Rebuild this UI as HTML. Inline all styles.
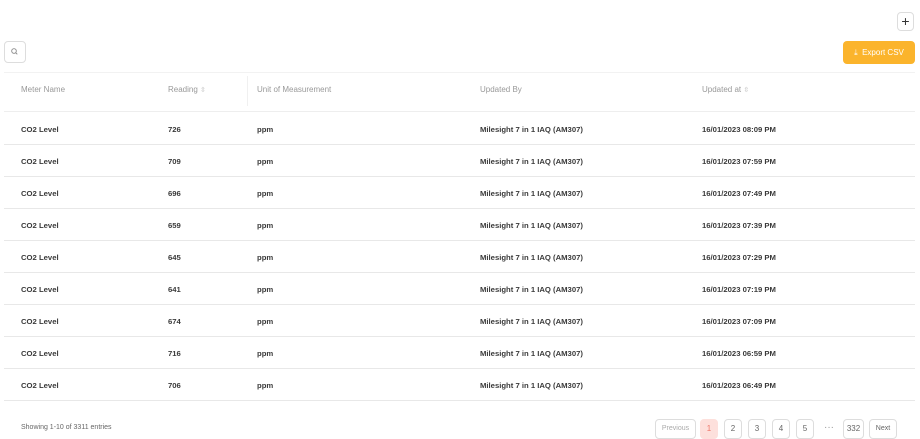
<!DOCTYPE html>
<html><head><style>
*{margin:0;padding:0;box-sizing:border-box}
body{width:920px;height:437px;background:#fff;font-family:"Liberation Sans",sans-serif;position:relative;overflow:hidden;color:#333}
.abs{position:absolute}
.plus{left:897px;top:12px;width:17px;height:19px;border:1px solid #ddd;border-radius:4px;font-size:14px;text-align:center;line-height:16px;color:#333}
.search{left:4px;top:41px;width:22px;height:22px;border:1px solid #ddd;border-radius:4px}
.exp{left:843px;top:41px;width:72px;height:23px;background:#fbb42c;border-radius:4px;color:#fff;font-size:8px;line-height:23px;text-align:center}
.hdr{left:4px;top:72px;width:911px;height:40px;border-top:1px solid #f2f2f2;border-bottom:1px solid #eee}
.t{position:absolute;font-size:8px;white-space:nowrap}
.h{color:#999}
.row{position:absolute;left:4px;width:911px;height:32px;border-bottom:1px solid #e8e8e8}
.row .t{top:12px;color:#3a3a3a;font-weight:bold;font-size:7.7px}
.pg{position:absolute;top:419px;height:20px;border:1px solid #ddd;border-radius:4px;font-size:8px;color:#666;text-align:center;line-height:18px}
</style></head><body>
<div class="abs plus">+</div>
<div class="abs search"><svg width="20" height="20" viewBox="0 0 20 20"><circle cx="9" cy="9" r="2.3" fill="none" stroke="#888" stroke-width="0.9"/><line x1="10.7" y1="10.7" x2="12.3" y2="12.3" stroke="#888" stroke-width="0.9"/></svg></div>
<div class="abs exp">⤓ &nbsp;Export CSV</div>
<div class="abs hdr">
<span class="t h" style="left:17px;top:12px">Meter Name</span>
<span class="t h" style="left:164px;top:12px">Reading <span style="font-size:7px;color:#bbb">⇳</span></span>
<div style="position:absolute;left:243px;top:3px;width:1px;height:30px;background:#f0f0f0"></div>
<span class="t h" style="left:253px;top:12px">Unit of Measurement</span>
<span class="t h" style="left:476px;top:12px">Updated By</span>
<span class="t h" style="left:698px;top:12px">Updated at <span style="font-size:7px;color:#bbb">⇳</span></span>
</div>
<div class="row" style="top:113px"><span class="t" style="left:17px">CO2 Level</span><span class="t" style="left:164px">726</span><span class="t" style="left:253px">ppm</span><span class="t" style="left:476px">Milesight 7 in 1 IAQ (AM307)</span><span class="t" style="left:698px">16/01/2023 08:09 PM</span></div>
<div class="row" style="top:145px"><span class="t" style="left:17px">CO2 Level</span><span class="t" style="left:164px">709</span><span class="t" style="left:253px">ppm</span><span class="t" style="left:476px">Milesight 7 in 1 IAQ (AM307)</span><span class="t" style="left:698px">16/01/2023 07:59 PM</span></div>
<div class="row" style="top:177px"><span class="t" style="left:17px">CO2 Level</span><span class="t" style="left:164px">696</span><span class="t" style="left:253px">ppm</span><span class="t" style="left:476px">Milesight 7 in 1 IAQ (AM307)</span><span class="t" style="left:698px">16/01/2023 07:49 PM</span></div>
<div class="row" style="top:209px"><span class="t" style="left:17px">CO2 Level</span><span class="t" style="left:164px">659</span><span class="t" style="left:253px">ppm</span><span class="t" style="left:476px">Milesight 7 in 1 IAQ (AM307)</span><span class="t" style="left:698px">16/01/2023 07:39 PM</span></div>
<div class="row" style="top:241px"><span class="t" style="left:17px">CO2 Level</span><span class="t" style="left:164px">645</span><span class="t" style="left:253px">ppm</span><span class="t" style="left:476px">Milesight 7 in 1 IAQ (AM307)</span><span class="t" style="left:698px">16/01/2023 07:29 PM</span></div>
<div class="row" style="top:273px"><span class="t" style="left:17px">CO2 Level</span><span class="t" style="left:164px">641</span><span class="t" style="left:253px">ppm</span><span class="t" style="left:476px">Milesight 7 in 1 IAQ (AM307)</span><span class="t" style="left:698px">16/01/2023 07:19 PM</span></div>
<div class="row" style="top:305px"><span class="t" style="left:17px">CO2 Level</span><span class="t" style="left:164px">674</span><span class="t" style="left:253px">ppm</span><span class="t" style="left:476px">Milesight 7 in 1 IAQ (AM307)</span><span class="t" style="left:698px">16/01/2023 07:09 PM</span></div>
<div class="row" style="top:337px"><span class="t" style="left:17px">CO2 Level</span><span class="t" style="left:164px">716</span><span class="t" style="left:253px">ppm</span><span class="t" style="left:476px">Milesight 7 in 1 IAQ (AM307)</span><span class="t" style="left:698px">16/01/2023 06:59 PM</span></div>
<div class="row" style="top:369px"><span class="t" style="left:17px">CO2 Level</span><span class="t" style="left:164px">706</span><span class="t" style="left:253px">ppm</span><span class="t" style="left:476px">Milesight 7 in 1 IAQ (AM307)</span><span class="t" style="left:698px">16/01/2023 06:49 PM</span></div>
<span class="t" style="left:21px;top:424px;font-size:7px;color:#666">Showing 1-10 of 3311 entries</span>
<div class="pg" style="left:655px;width:41px;color:#aaa;font-size:7px">Previous</div>
<div class="pg" style="left:700px;width:18px;background:#fde0dc;border-color:#fde0dc;color:#f0786a">1</div>
<div class="pg" style="left:724px;width:18px">2</div>
<div class="pg" style="left:748px;width:18px">3</div>
<div class="pg" style="left:772px;width:18px">4</div>
<div class="pg" style="left:796px;width:18px">5</div>
<div class="pg" style="left:820px;width:18px;border:none;color:#999;font-size:10px">···</div>
<div class="pg" style="left:843px;width:21px">332</div>
<div class="pg" style="left:869px;width:28px;font-size:7px">Next</div>
</body></html>
